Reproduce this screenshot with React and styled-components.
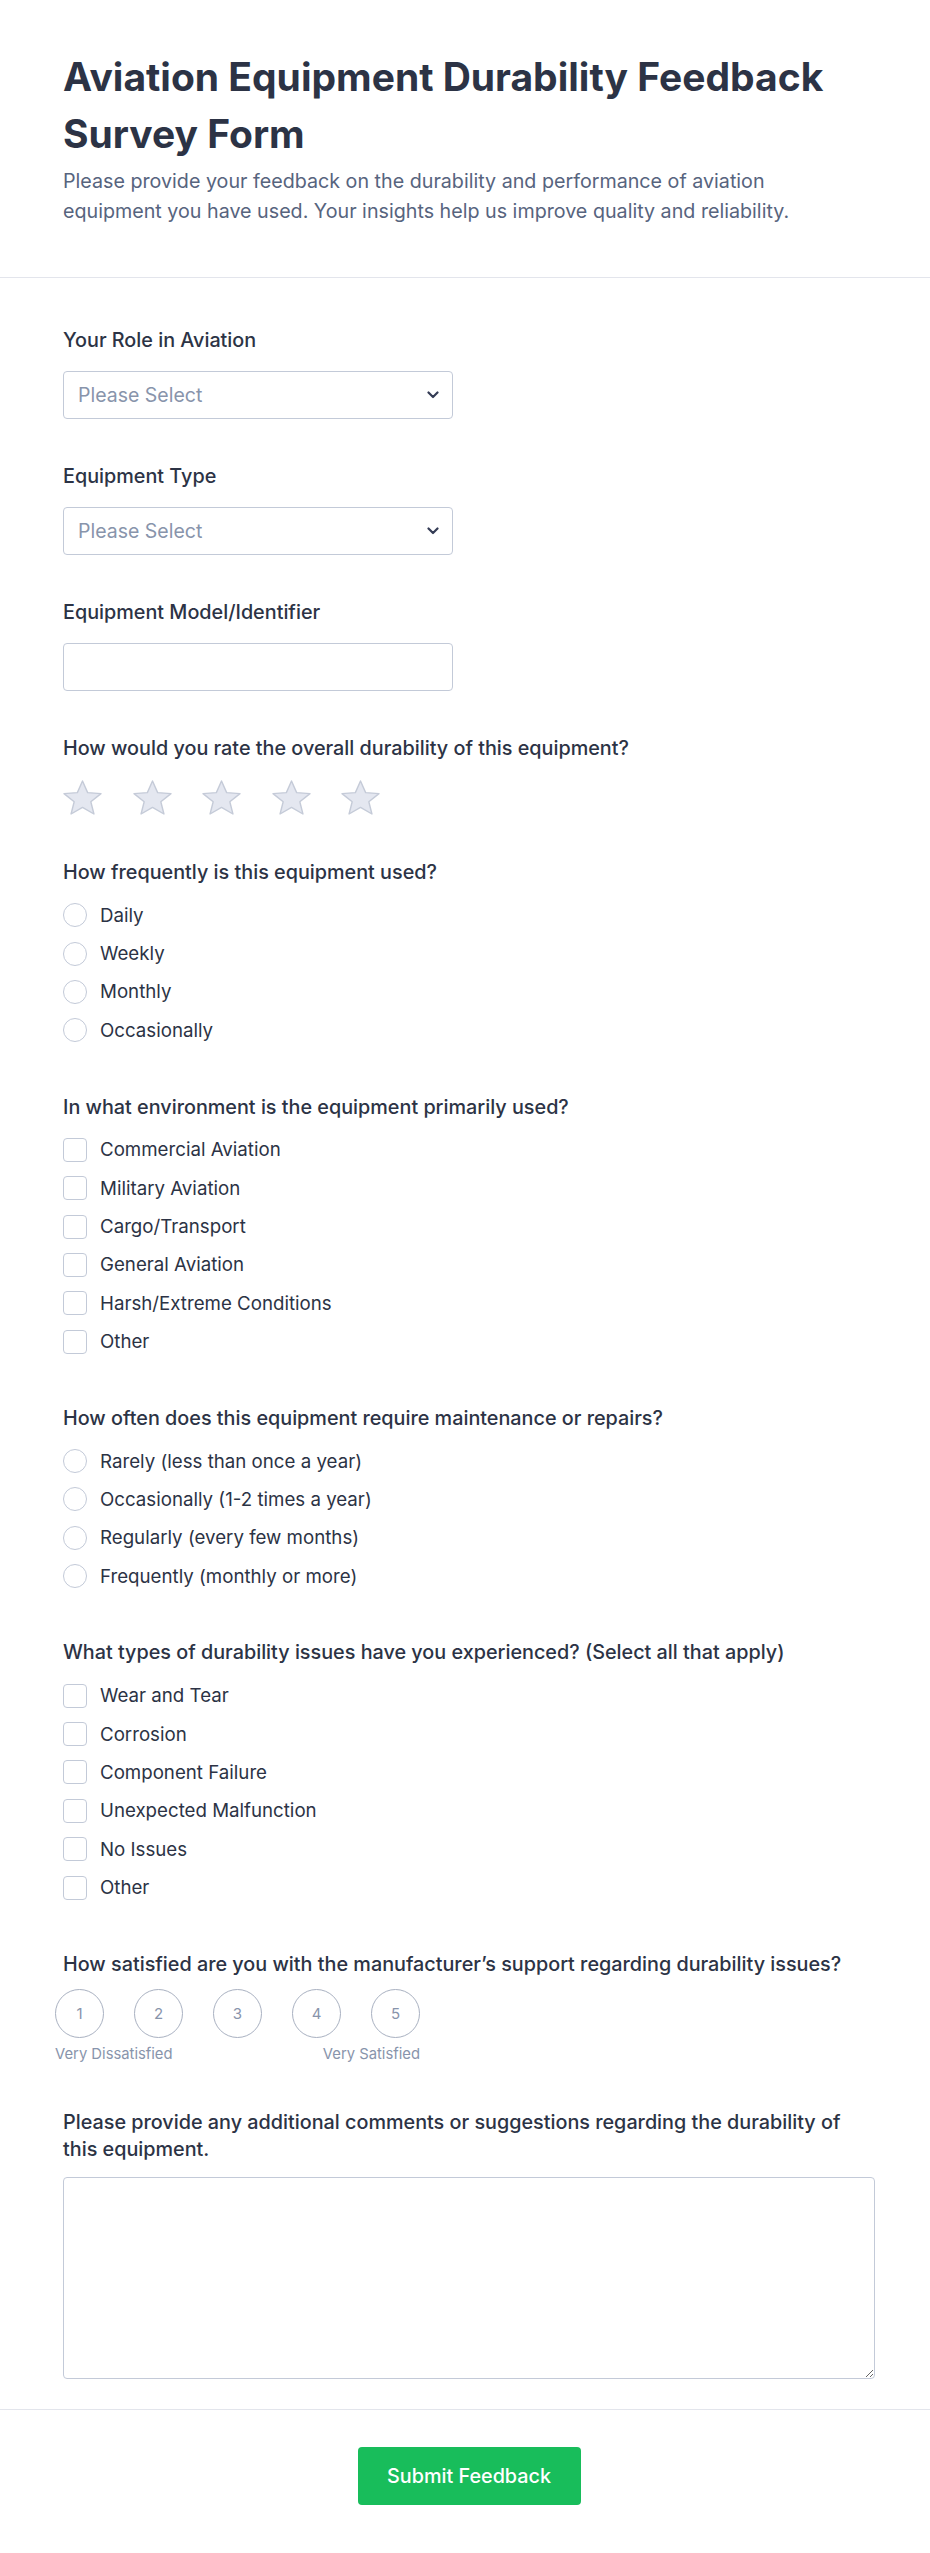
import React from "react";
import styled, { createGlobalStyle } from "styled-components";

const GlobalStyle = createGlobalStyle`
  *, *::before, *::after {
    box-sizing: border-box;
  }

  body {
    margin: 0;
    background: #fff;
    font-family: Inter, "Noto Sans", "Liberation Sans", sans-serif;
    color: #2c3345;
  }
`;

const Page = styled.div`
  width: 100%;
  background: #fff;
`;

const Header = styled.header`
  padding: 48px 55px 51px 63px;
  border-bottom: 1px solid #e3e5ec;
`;

const Title = styled.h1`
  margin: 0;
  font-size: 39px;
  line-height: 57px;
  font-weight: 700;
  color: #2c3345;
`;

const Subtitle = styled.p`
  margin: 4px 0 0;
  max-width: 770px;
  font-size: 19.7px;
  line-height: 30px;
  color: #57647e;
`;

const FormBody = styled.form`
  display: flex;
  flex-direction: column;
  gap: 45px;
  padding: 50px 55px 30px 63px;
  border-bottom: 1px solid #e3e5ec;
`;

const Field = styled.div`
  display: flex;
  flex-direction: column;
`;

const Label = styled.label`
  font-size: 19.8px;
  line-height: ${(p) => (p.$wrap ? "27px" : "24px")};
  font-weight: 500;
  color: #2c3345;
  margin-bottom: ${(p) => p.$space || 19}px;
`;

const SelectWrap = styled.div`
  position: relative;
  width: 390px;
`;

const Select = styled.select`
  appearance: none;
  width: 100%;
  height: 48px;
  padding: 0 40px 0 14px;
  border: 1px solid #c3cad8;
  border-radius: 4px;
  background: #fff;
  font-family: inherit;
  font-size: 19.5px;
  color: #8894ab;
`;

const Chevron = styled.svg`
  position: absolute;
  right: 14px;
  top: 50%;
  transform: translateY(-50%);
  pointer-events: none;
`;

const TextInput = styled.input`
  width: 390px;
  height: 48px;
  padding: 0 14px;
  border: 1px solid #c3cad8;
  border-radius: 4px;
  font-family: inherit;
  font-size: 19.5px;
  color: #2c3345;
`;

const StarRow = styled.div`
  display: flex;
  gap: 30.5px;
`;

const Options = styled.div`
  display: flex;
  flex-direction: column;
`;

const Option = styled.label`
  display: flex;
  align-items: center;
  gap: 13px;
  height: 38.4px;
  font-size: 18.7px;
  color: #2c3345;
`;

const Toggle = styled.input`
  appearance: none;
  margin: 0;
  width: 24px;
  height: 24px;
  flex: none;
  border: 1px solid #c3cad8;
  border-radius: ${(p) => (p.type === "radio" ? "50%" : "4px")};
  background: #fff;
`;

const Scale = styled.div`
  display: flex;
  flex-direction: column;
  width: 365px;
  margin-left: -8px;
`;

const ScaleButtons = styled.div`
  display: flex;
  gap: 30px;
`;

const ScaleButton = styled.button`
  width: 49px;
  height: 49px;
  border: 1px solid #a9b1c1;
  border-radius: 50%;
  background: #fff;
  font-family: inherit;
  font-size: 15px;
  color: #8894ab;
  padding: 0;
`;

const ScaleCaptions = styled.div`
  display: flex;
  justify-content: space-between;
  margin-top: 6px;
  font-size: 14.8px;
  line-height: 20px;
  color: #8894ab;
`;

const Comments = styled.textarea`
  width: 100%;
  height: 202px;
  border: 1px solid #c3cad8;
  border-radius: 4px;
  resize: vertical;
  font-family: inherit;
  font-size: 18px;
`;

const Footer = styled.div`
  display: flex;
  justify-content: center;
  padding: 37px 55px 50px 63px;
`;

const SubmitButton = styled.button`
  width: 223px;
  height: 58px;
  border: none;
  border-radius: 4px;
  background: #18bd5b;
  color: #fff;
  font-family: inherit;
  font-size: 19.8px;
  font-weight: 500;
`;

const frequency = ["Daily", "Weekly", "Monthly", "Occasionally"];
const environments = [
  "Commercial Aviation",
  "Military Aviation",
  "Cargo/Transport",
  "General Aviation",
  "Harsh/Extreme Conditions",
  "Other",
];
const maintenance = [
  "Rarely (less than once a year)",
  "Occasionally (1-2 times a year)",
  "Regularly (every few months)",
  "Frequently (monthly or more)",
];
const issues = [
  "Wear and Tear",
  "Corrosion",
  "Component Failure",
  "Unexpected Malfunction",
  "No Issues",
  "Other",
];

const Star = () => (
  <svg width="39" height="35" viewBox="0 0 39 35">
    <polygon
      points="19.5,1 24.64,12.6 38,13.6 27.82,21.78 30.94,34 19.5,27.45 8.06,34 11.18,21.78 1,13.6 14.36,12.6"
      fill="#e4e7f0"
      stroke="#c5cbd8"
      strokeWidth="1.4"
      strokeLinejoin="round"
    />
  </svg>
);

const Dropdown = ({ id }) => (
  <SelectWrap>
    <Select id={id} defaultValue="">
      <option value="">Please Select</option>
    </Select>
    <Chevron width="12" height="8" viewBox="0 0 12 8">
      <path d="M1.5 1.5 6 6l4.5-4.5" fill="none" stroke="#343c55" strokeWidth="2.2" strokeLinecap="round" strokeLinejoin="round" />
    </Chevron>
  </SelectWrap>
);

const Choices = ({ name, type, items }) => (
  <Options>
    {items.map((item) => (
      <Option key={item}>
        <Toggle type={type} name={name} />
        {item}
      </Option>
    ))}
  </Options>
);

const App = () => (
  <Page>
    <GlobalStyle />
    <Header>
      <Title>Aviation Equipment Durability Feedback Survey Form</Title>
      <Subtitle>
        Please provide your feedback on the durability and performance of aviation equipment you
        have used. Your insights help us improve quality and reliability.
      </Subtitle>
    </Header>

    <FormBody onSubmit={(e) => e.preventDefault()}>
      <Field>
        <Label htmlFor="role">Your Role in Aviation</Label>
        <Dropdown id="role" />
      </Field>

      <Field>
        <Label htmlFor="type">Equipment Type</Label>
        <Dropdown id="type" />
      </Field>

      <Field>
        <Label htmlFor="model">Equipment Model/Identifier</Label>
        <TextInput id="model" type="text" />
      </Field>

      <Field>
        <Label $space={20}>How would you rate the overall durability of this equipment?</Label>
        <StarRow>
          {[1, 2, 3, 4, 5].map((n) => (
            <Star key={n} />
          ))}
        </StarRow>
      </Field>

      <Field>
        <Label $space={12}>How frequently is this equipment used?</Label>
        <Choices name="frequency" type="radio" items={frequency} />
      </Field>

      <Field>
        <Label $space={12}>In what environment is the equipment primarily used?</Label>
        <Choices name="environment" type="checkbox" items={environments} />
      </Field>

      <Field>
        <Label $space={12}>How often does this equipment require maintenance or repairs?</Label>
        <Choices name="maintenance" type="radio" items={maintenance} />
      </Field>

      <Field>
        <Label $space={12}>
          What types of durability issues have you experienced? (Select all that apply)
        </Label>
        <Choices name="issues" type="checkbox" items={issues} />
      </Field>

      <Field>
        <Label $space={13}>
          How satisfied are you with the manufacturer’s support regarding durability issues?
        </Label>
        <Scale>
          <ScaleButtons>
            {[1, 2, 3, 4, 5].map((n) => (
              <ScaleButton type="button" key={n}>
                {n}
              </ScaleButton>
            ))}
          </ScaleButtons>
          <ScaleCaptions>
            <span>Very Dissatisfied</span>
            <span>Very Satisfied</span>
          </ScaleCaptions>
        </Scale>
      </Field>

      <Field>
        <Label htmlFor="comments" $wrap $space={14}>
          Please provide any additional comments or suggestions regarding the durability of this
          equipment.
        </Label>
        <Comments id="comments" />
      </Field>
    </FormBody>

    <Footer>
      <SubmitButton type="submit">Submit Feedback</SubmitButton>
    </Footer>
  </Page>
);

export default App;
